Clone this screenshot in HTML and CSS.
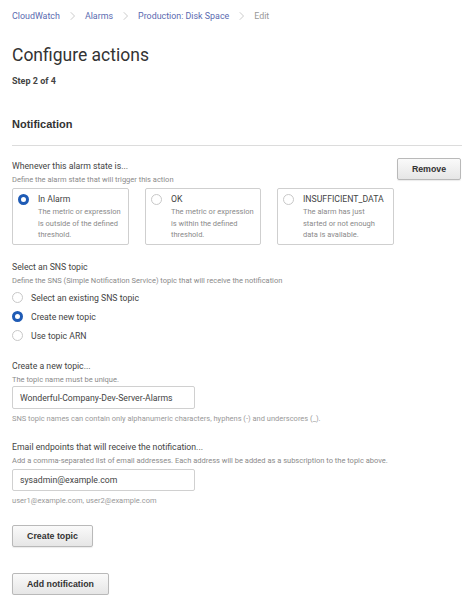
FILE: index.html
```html
<!DOCTYPE html>
<html>
<head>
<meta charset="utf-8">
<link rel="stylesheet" href="styles.css">
</head>
<body>
<div class="page">
  <nav class="crumbs">
    <a class="crumb">CloudWatch</a>
    <svg class="chev" viewBox="0 0 8 12" width="6" height="10"><path d="M1 1l5 5-5 5" fill="none" stroke="#c4c4c4" stroke-width="1.2"/></svg>
    <a class="crumb">Alarms</a>
    <svg class="chev" viewBox="0 0 8 12" width="6" height="10"><path d="M1 1l5 5-5 5" fill="none" stroke="#c4c4c4" stroke-width="1.2"/></svg>
    <a class="crumb">Production: Disk Space</a>
    <svg class="chev" viewBox="0 0 8 12" width="6" height="10"><path d="M1 1l5 5-5 5" fill="none" stroke="#c4c4c4" stroke-width="1.2"/></svg>
    <span class="crumb current">Edit</span>
  </nav>

  <h1 class="title">Configure actions</h1>
  <div class="step">Step 2 of 4</div>

  <h2 class="section">Notification</h2>
  <hr class="rule">

  <div class="state-row">
    <div class="state-main">
      <div class="label">Whenever this alarm state is...</div>
      <div class="desc">Define the alarm state that will trigger this action</div>
      <div class="cards">
        <div class="card">
          <span class="radio on"></span>
          <div class="card-body">
            <div class="card-title">In Alarm</div>
            <div class="card-text">The metric or expression is outside of the defined threshold.</div>
          </div>
        </div>
        <div class="card">
          <span class="radio"></span>
          <div class="card-body">
            <div class="card-title">OK</div>
            <div class="card-text">The metric or expression is within the defined threshold.</div>
          </div>
        </div>
        <div class="card">
          <span class="radio"></span>
          <div class="card-body">
            <div class="card-title">INSUFFICIENT_DATA</div>
            <div class="card-text">The alarm has just started or not enough data is available.</div>
          </div>
        </div>
      </div>
    </div>
    <button class="btn remove">Remove</button>
  </div>

  <div class="field sns">
    <div class="label">Select an SNS topic</div>
    <div class="desc">Define the SNS (Simple Notification Service) topic that will receive the notification</div>
    <div class="options">
      <div class="option"><span class="radio"></span>Select an existing SNS topic</div>
      <div class="option"><span class="radio on"></span>Create new topic</div>
      <div class="option"><span class="radio"></span>Use topic ARN</div>
    </div>
  </div>

  <div class="field topic">
    <div class="label">Create a new topic...</div>
    <div class="desc">The topic name must be unique.</div>
    <div class="input">Wonderful-Company-Dev-Server-Alarms</div>
    <div class="hint">SNS topic names can contain only alphanumeric characters, hyphens (-) and underscores (_).</div>
  </div>

  <div class="field email">
    <div class="label">Email endpoints that will receive the notification...</div>
    <div class="desc">Add a comma-separated list of email addresses. Each address will be added as a subscription to the topic above.</div>
    <div class="input">sysadmin@example.com</div>
    <div class="hint">user1@example.com, user2@example.com</div>
  </div>

  <button class="btn create">Create topic</button>
  <button class="btn add">Add notification</button>
</div>
</body>
</html>
```
FILE: styles.css
```css
* { box-sizing: border-box; }
html, body { margin: 0; background: #fff; }
body { font-family: Roboto, "Liberation Sans", sans-serif; color: #444; }
.page { padding: 0 12px; display: flex; flex-direction: column; align-items: flex-start; }

.crumbs { display: flex; align-items: center; height: 32px; font-size: 8.9px; }
.crumb { color: #5a6ab0; }
.crumb.current { color: #999; }
.chev { margin: 0 9px 0 10px; }

.title { font-size: 17.5px; font-weight: 400; color: #333; margin: 11px 0 0; line-height: 24px; }
.step { font-size: 9px; font-weight: 700; color: #444; margin-top: 9px; }

.section { font-size: 11px; font-weight: 700; color: #333; margin: 30px 0 0; line-height: 16px; font-family: "Liberation Sans", Roboto, sans-serif; }
.rule { align-self: stretch; border: 0; border-top: 1px solid #dcdcdc; margin: 13px 0 0; }

.state-row { align-self: stretch; display: flex; justify-content: space-between; align-items: flex-start; margin-top: 13px; }
.label { font-size: 8.7px; color: #444; line-height: 14px; }
.desc { font-size: 7.5px; color: #8a8a8a; line-height: 12px; margin-top: 1px; }

.cards { display: flex; gap: 16px; margin-top: 2px; }
.card { width: 117px; height: 57px; border: 1px solid #cfcfcf; border-radius: 2px; display: flex; padding: 4px 4px 0 5px; }
.card:nth-child(2) { width: 116px; }
.card-body { margin-left: 9px; }
.card-title { font-size: 8.7px; color: #444; line-height: 12px; }
.card-text { font-size: 7.5px; color: #8a8a8a; line-height: 11.5px; margin-top: 1px; }

.radio { flex: none; width: 11px; height: 11px; border-radius: 50%; border: 1px solid #c8c8c8; background: #fff; display: inline-block; margin-top: 1px; }
.radio.on { border: 3px solid #1f5bb5; background: #fff; }

.btn { font-family: "Liberation Sans", Arial, sans-serif; font-weight: 700; font-size: 8.8px; color: #333; border: 1px solid #b9b9b9; border-radius: 2px; background: linear-gradient(#fafafa, #e6e6e6); box-shadow: 0 1px 1px rgba(0,0,0,0.08); padding: 0; }
.remove { width: 64px; height: 22px; margin-top: -1px; margin-right: 1px; }

.field { align-self: stretch; }
.sns { margin-top: 15px; }
.options { display: flex; flex-direction: column; margin-top: 1px; }
.option { display: flex; align-items: center; height: 19px; font-size: 8.7px; color: #444; }
.option .radio { margin: 0 8px 0 0; }

.topic { margin-top: 14px; }
.input { width: 183px; height: 23px; border: 1px solid #d0d0d0; border-radius: 2px; font-size: 8.7px; color: #444; padding: 0 7px; display: flex; align-items: center; margin-top: 0; white-space: nowrap; }
.hint { font-size: 7.5px; color: #999; margin-top: 4px; line-height: 12px; }
.email { margin-top: 15px; }
.email .input { margin-top: 2px; height: 22px; }

.create { width: 81px; height: 22px; margin-top: 18px; }
.add { width: 97px; height: 22px; margin-top: 26px; }
```
